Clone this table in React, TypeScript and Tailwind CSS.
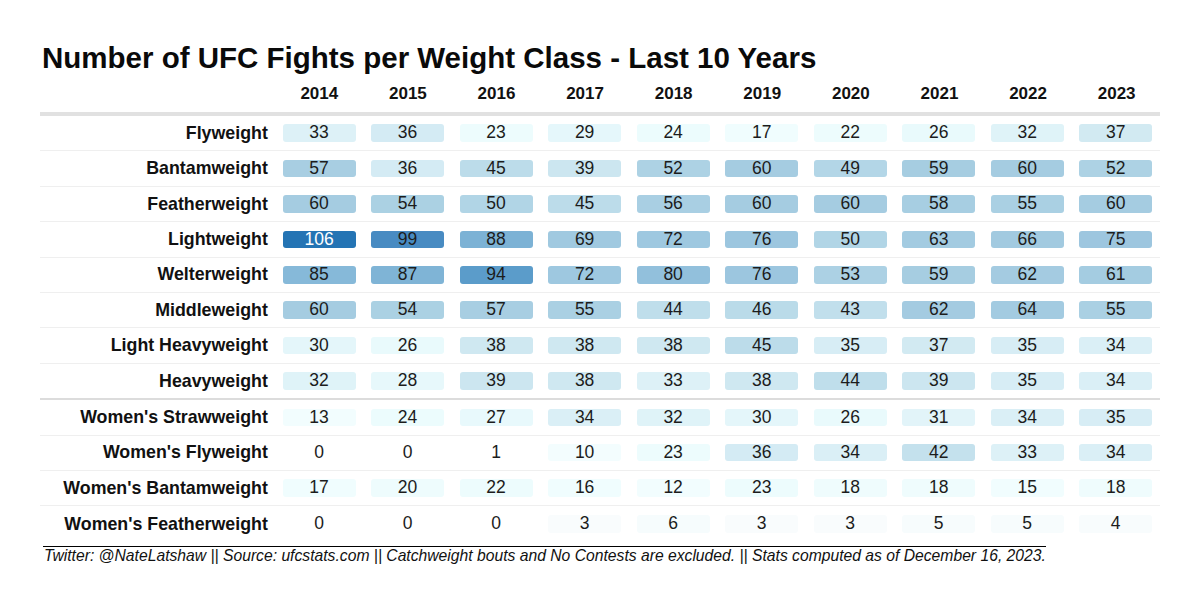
import React from "react";

const years = [2014, 2015, 2016, 2017, 2018, 2019, 2020, 2021, 2022, 2023];

const mens = [
  { name: "Flyweight", counts: [33, 36, 23, 29, 24, 17, 22, 26, 32, 37] },
  { name: "Bantamweight", counts: [57, 36, 45, 39, 52, 60, 49, 59, 60, 52] },
  { name: "Featherweight", counts: [60, 54, 50, 45, 56, 60, 60, 58, 55, 60] },
  { name: "Lightweight", counts: [106, 99, 88, 69, 72, 76, 50, 63, 66, 75] },
  { name: "Welterweight", counts: [85, 87, 94, 72, 80, 76, 53, 59, 62, 61] },
  { name: "Middleweight", counts: [60, 54, 57, 55, 44, 46, 43, 62, 64, 55] },
  { name: "Light Heavyweight", counts: [30, 26, 38, 38, 38, 45, 35, 37, 35, 34] },
  { name: "Heavyweight", counts: [32, 28, 39, 38, 33, 38, 44, 39, 35, 34] },
];

const womens = [
  { name: "Women's Strawweight", counts: [13, 24, 27, 34, 32, 30, 26, 31, 34, 35] },
  { name: "Women's Flyweight", counts: [0, 0, 1, 10, 23, 36, 34, 42, 33, 34] },
  { name: "Women's Bantamweight", counts: [17, 20, 22, 16, 12, 23, 18, 18, 15, 18] },
  { name: "Women's Featherweight", counts: [0, 0, 0, 3, 6, 3, 3, 5, 5, 4] },
];

// colour stops picked off the reference, value -> rgb
const stops: [number, [number, number, number]][] = [
  [0, [255, 255, 255]],
  [1, [255, 255, 255]],
  [3, [249, 252, 253]],
  [10, [243, 253, 254]],
  [24, [236, 252, 253]],
  [30, [228, 246, 250]],
  [34, [218, 239, 246]],
  [39, [204, 230, 240]],
  [45, [188, 220, 234]],
  [52, [173, 210, 228]],
  [60, [165, 204, 225]],
  [76, [156, 198, 223]],
  [85, [134, 185, 217]],
  [88, [124, 178, 213]],
  [94, [91, 156, 202]],
  [99, [72, 139, 194]],
  [106, [36, 116, 180]],
];

function cellColor(v: number) {
  for (let i = 1; i < stops.length; i++) {
    const [hi, c2] = stops[i];
    const [lo, c1] = stops[i - 1];
    if (v <= hi) {
      const t = (v - lo) / (hi - lo);
      const c = c1.map((a, k) => Math.round(a + (c2[k] - a) * t));
      return `rgb(${c[0]}, ${c[1]}, ${c[2]})`;
    }
  }
  return "rgb(36, 116, 180)";
}

const Row = ({ name, counts, border }: { name: string; counts: number[]; border: string }) => (
  <div className={`flex items-center ${border}`}>
    <div className="w-[235px] pr-[7px] text-right text-[17.8px] font-bold text-[#111]">{name}</div>
    {counts.map((v, i) => (
      <div key={i} className="w-[88.6px] flex justify-center">
        <div
          className={`w-[73px] h-[17.5px] rounded-[3px] flex items-center justify-center text-[17.5px] leading-none ${
            v > 100 ? "text-white" : "text-[#1c1c1c]"
          }`}
          style={{ backgroundColor: cellColor(v) }}
        >
          {v}
        </div>
      </div>
    ))}
  </div>
);

export default function App() {
  return (
    <div className="w-[1200px] h-[607px] bg-white font-['Liberation_Sans',Arial,sans-serif] text-black">
      <div className="pl-[40px] pt-[42px]">
        <h1 className="ml-[2px] text-[29.5px] leading-[32px] font-bold text-[#0a0a0a]">
          Number of UFC Fights per Weight Class - Last 10 Years
        </h1>

        {/* Year header */}
        <div className="flex pt-[10px] pb-[8px] leading-[20px]">
          <div className="w-[235px]" />
          {years.map((y) => (
            <div key={y} className="w-[88.6px] text-center text-[17px] font-bold text-[#111]">
              {y}
            </div>
          ))}
        </div>
        <div className="w-[1120px] h-[4px] bg-[#e1e1e1]" />

        <div className="w-[1120px]">
          {mens.map((r, i) => (
            <Row
              key={r.name}
              {...r}
              border={
                i === mens.length - 1
                  ? "h-[36.4px] border-b-2 border-[#dcdcdc]"
                  : "h-[35.4px] border-b border-[#efefef]"
              }
            />
          ))}
          {womens.map((r, i) => (
            <Row
              key={r.name}
              {...r}
              border={i === womens.length - 1 ? "h-[35.4px]" : "h-[35.4px] border-b border-[#efefef]"}
            />
          ))}
        </div>

        {/* Footnote */}
        <div className="mt-[2px] ml-[3px]">
          <p className="inline-block border-t border-black pl-[1px] text-[15.7px] leading-[17px] italic text-[#111]">
            Twitter: @NateLatshaw || Source: ufcstats.com || Catchweight bouts and No Contests are excluded. || Stats computed as of December 16, 2023.
          </p>
        </div>
      </div>
    </div>
  );
}
